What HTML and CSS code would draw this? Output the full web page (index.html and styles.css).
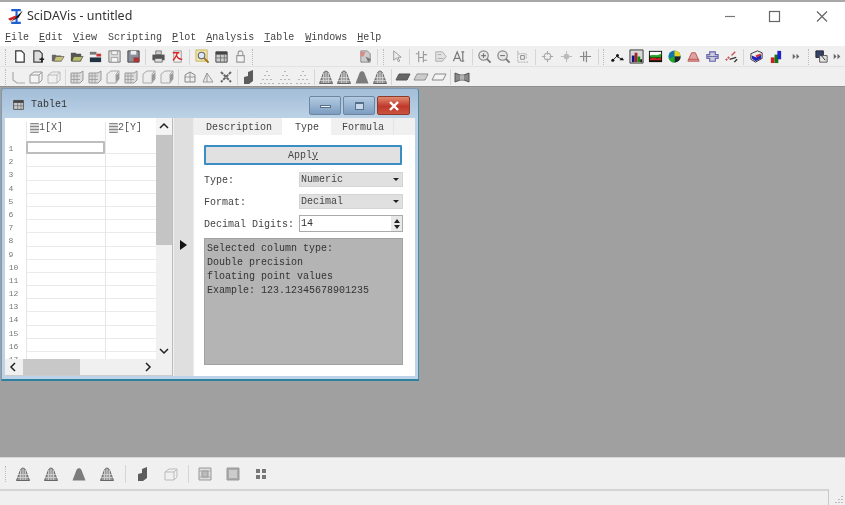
FILE: index.html
```html
<!DOCTYPE html>
<html lang="en">
<head>
  <meta charset="UTF-8" />
  <title>SciDAVis - untitled</title>
  <link rel="stylesheet" href="styles.css">
</head>
<body>
<svg class="sprite" width="0" height="0">
  <symbol id="i-new" viewBox="0 0 16 16"><path d="M4 2h6l3 3v9H4z" fill="#fff" stroke="#333" stroke-width="1.300"/></symbol>
  <symbol id="i-newproj" viewBox="0 0 16 16"><path d="M3 2h6l3 3v9H3z" fill="#ddd" stroke="#444" stroke-width="1.300"/><path d="M9 11h5M11.500 9v5" stroke="#222" stroke-width="1.600"/></symbol>
  <symbol id="i-open" viewBox="0 0 16 16"><path d="M2 13V6h4l1 1h5v6z" fill="#666"/><path d="M4 13l2-5h9l-3 5z" fill="#c9c27a" stroke="#555" stroke-width=".7"/></symbol>
  <symbol id="i-open2" viewBox="0 0 16 16"><path d="M2 13V4h5l1 1h5v8z" fill="#555"/><path d="M3 13l2-5h10l-3 5z" fill="#b7bd6b" stroke="#444" stroke-width=".7"/></symbol>
  <symbol id="i-recent" viewBox="0 0 16 16"><path d="M2 3h7v3H2z" fill="#777"/><path d="M9 5h5v3H9z" fill="#c33"/><path d="M2 9h12v5H2z" fill="#234"/></symbol>
  <symbol id="i-save" viewBox="0 0 16 16"><path d="M2 2h12v12H2z" fill="#ddd" stroke="#777"/><path d="M5 2h6v4H5zM4.500 9h7v5h-7z" fill="#f4f4f4" stroke="#888" stroke-width=".7"/></symbol>
  <symbol id="i-saveas" viewBox="0 0 16 16"><path d="M2 2h12v12H2z" fill="#8a8f99" stroke="#444"/><path d="M5 2h6v4H5z" fill="#eee"/><path d="M8 9h6v5H8z" fill="#a33"/></symbol>
  <symbol id="i-print" viewBox="0 0 16 16"><path d="M5 2h6v4H5z" fill="#ccc" stroke="#555" stroke-width=".7"/><path d="M1.500 6h13v6h-13z" fill="#555"/><path d="M4 10h8v4H4z" fill="#ddd" stroke="#444" stroke-width=".7"/></symbol>
  <symbol id="i-pdf" viewBox="0 0 16 16"><path d="M4 2h8v12H4z" fill="#f4f4f4" stroke="#999"/><path d="M3 4h7M8 4c-2 5-3 7-5 8M7 7c1 3 3 4 6 4" fill="none" stroke="#d22" stroke-width="1.400"/></symbol>
  <symbol id="i-find" viewBox="0 0 16 16"><path d="M1 1h12v12H1z" fill="#f0e6a8" stroke="#c8b860"/><circle cx="7" cy="7" r="3.500" fill="#dfe8f2" stroke="#667" stroke-width="1.200"/><path d="M10 10l4.500 4.500" stroke="#a07020" stroke-width="2"/></symbol>
  <symbol id="i-table" viewBox="0 0 16 16"><path d="M2 3h12v11H2z" fill="#ccc" stroke="#444"/><path d="M2 3h12v3H2z" fill="#444"/><path d="M2 9.500h12M7 6v8M11 6v8" stroke="#666" stroke-width=".8"/></symbol>
  <symbol id="i-lock" viewBox="0 0 16 16"><path d="M4 7h8v7H4z" fill="#f4f4f4" stroke="#999" stroke-width="1.200"/><path d="M5.500 7V4.500a2.500 2.500 0 0 1 5 0V7" fill="none" stroke="#999" stroke-width="1.200"/></symbol>
  <symbol id="i-script" viewBox="0 0 16 16"><path d="M3 2h7l3 3v9H3z" fill="#ccc" stroke="#888"/><path d="M3 3h5l-2 5H3z" fill="#d88"/><path d="M8 8l6 3-3 3z" fill="#777"/></symbol>
  <symbol id="i-pointer" viewBox="0 0 16 16"><path d="M5 2v10l3-2.500 2 4 1.500-.7-2-4H13z" fill="#eee" stroke="#999"/></symbol>
  <symbol id="i-axes" viewBox="0 0 16 16"><path d="M5 2v12M10 2v12M5 5H2M5 9h5M10 6h4M10 12h4" fill="none" stroke="#999" stroke-width="1.200"/></symbol>
  <symbol id="i-legend" viewBox="0 0 16 16"><path d="M3 3h7l4 5-4 5H3z" fill="#e4e4e4" stroke="#aaa"/><path d="M5 6h4M5 10h6" stroke="#aaa"/></symbol>
  <symbol id="i-text" viewBox="0 0 16 16"><path d="M1.500 13L5.500 3l4 10M3 10h5M11.500 3v10M10 3h3M10 13h3" fill="none" stroke="#7a7a7a" stroke-width="1.300"/></symbol>
  <symbol id="i-zoomin" viewBox="0 0 16 16"><circle cx="7" cy="7" r="5" fill="#e6e6e6" stroke="#888" stroke-width="1.300"/><path d="M4.500 7h5M7 4.500v5" stroke="#777" stroke-width="1.200"/><path d="M10.500 10.500l4 4" stroke="#777" stroke-width="2"/></symbol>
  <symbol id="i-zoomout" viewBox="0 0 16 16"><circle cx="7" cy="7" r="5" fill="#e6e6e6" stroke="#888" stroke-width="1.300"/><path d="M4.500 7h5" stroke="#777" stroke-width="1.200"/><path d="M10.500 10.500l4 4" stroke="#777" stroke-width="2"/></symbol>
  <symbol id="i-rescale" viewBox="0 0 16 16"><path d="M3 2v12h12M3 5h9v6" fill="none" stroke="#aaa" stroke-dasharray="2 1"/><path d="M6 7h4v4H6z" fill="none" stroke="#888"/></symbol>
  <symbol id="i-cross" viewBox="0 0 16 16"><circle cx="8" cy="8" r="3.500" fill="none" stroke="#aaa" stroke-width="1.200"/><path d="M8 2v4M8 10v4M2 8h4M10 8h4" stroke="#aaa" stroke-width="1.200"/></symbol>
  <symbol id="i-dot" viewBox="0 0 16 16"><circle cx="8" cy="8" r="3" fill="#bbb"/><path d="M8 2v12M2 8h12" stroke="#bbb"/></symbol>
  <symbol id="i-move" viewBox="0 0 16 16"><path d="M2 8h12M9 2v12M6 3v10" stroke="#888" stroke-width="1.300"/></symbol>
  <symbol id="i-lines" viewBox="0 0 16 16"><path d="M2 13l5-5 6 3" fill="none" stroke="#222"/><circle cx="3" cy="12" r="1.600" fill="#111"/><circle cx="8" cy="7" r="1.600" fill="#111"/><path d="M10 12l3-3 2 3z" fill="#111"/></symbol>
  <symbol id="i-bars" viewBox="0 0 16 16"><path d="M1 1h14v14H1z" fill="#d8d8d8" stroke="#333"/><path d="M3 7h3v7H3z" fill="#118"/><path d="M6 4h3v10H6z" fill="#a22"/><path d="M9 8h3v6H9z" fill="#181"/><path d="M12 11h2v3h-2z" fill="#111"/></symbol>
  <symbol id="i-area" viewBox="0 0 16 16"><path d="M1 2h14v12H1z" fill="#111"/><path d="M2 3h12v4H2z" fill="#fff"/><path d="M2 8l3-2 4 1 5-2v4H2z" fill="#2a2"/><path d="M2 10l4-1 4 1 4-1v3H2z" fill="#c22"/></symbol>
  <symbol id="i-pie" viewBox="0 0 16 16"><circle cx="8" cy="8" r="6.500" fill="#17a"/><path d="M8 8V1.500A6.500 6.500 0 0 1 14.500 8z" fill="#e8d020"/><path d="M8 8h6.500A6.500 6.500 0 0 1 8 14.500z" fill="#222"/><path d="M8 8v6.500A6.500 6.500 0 0 1 2 10z" fill="#2a2"/></symbol>
  <symbol id="i-mount" viewBox="0 0 16 16"><path d="M2 13l4-9h4l4 9z" fill="#e0a0a0" stroke="#b55"/><path d="M2 11h12" stroke="#b55"/></symbol>
  <symbol id="i-box" viewBox="0 0 16 16"><path d="M5 3h6v3h3v4h-3v3H5v-3H2V6h3z" fill="#ccd" stroke="#66a" stroke-width="1.200"/><path d="M2 8h12" stroke="#66a"/></symbol>
  <symbol id="i-stat" viewBox="0 0 16 16"><path d="M2 12l4-4" stroke="#c55" stroke-width="2" stroke-dasharray="2 1"/><path d="M8 7l4-4" stroke="#c55" stroke-width="1.500"/><path d="M6 11l7-2" stroke="#333" stroke-width="1.500"/><path d="M11 14l3-3" stroke="#333" stroke-width="1.500"/></symbol>
  <symbol id="i-cube3" viewBox="0 0 16 16"><path d="M2 5l7-3 5 2v6l-7 4-5-3z" fill="#eee" stroke="#333"/><path d="M3 7l5 2 5-3v4l-6 3-4-3z" fill="#22b"/><path d="M8 9l5-3-1-1-5 2z" fill="#c22"/></symbol>
  <symbol id="i-bar3" viewBox="0 0 16 16"><path d="M3 9h4v6H3z" fill="#c22"/><path d="M7 6h4v9H7z" fill="#171"/><path d="M10 2h4v9h-4z" fill="#22c"/></symbol>
  <symbol id="i-more" viewBox="0 0 16 16"><path d="M4 5l3 3-3 3zM8 5l3 3-3 3z" fill="#666"/></symbol>
  <symbol id="i-panel" viewBox="0 0 16 16"><path d="M2 2h8v7H2z" fill="#346" stroke="#223"/><path d="M6 7h8v7H6z" fill="#e6e6e6" stroke="#555"/><path d="M7 6l5 6" stroke="#222"/></symbol>
  <symbol id="i-l3d" viewBox="0 0 16 16"><path d="M3 3v8l4 3h8" fill="none" stroke="#aaa" stroke-width="1.200"/></symbol>
  <symbol id="i-cube" viewBox="0 0 16 16"><path d="M2 6l4-3h8v8l-3 3H2zM2 6h9v8M11 6l3-3" fill="#f4f4f4" stroke="#999"/></symbol>
  <symbol id="i-cubeb" viewBox="0 0 16 16"><path d="M2 6l4-3h8v8l-3 3H2zM2 6h9v8M11 6l3-3" fill="none" stroke="#bbb"/></symbol>
  <symbol id="i-gridcube" viewBox="0 0 16 16"><path d="M2 4h9l3-2v9l-3 3H2z" fill="#ddd" stroke="#999"/><path d="M2 7h9M2 10.500h9M5 4v10M8 4v10" stroke="#999" stroke-width=".8"/></symbol>
  <symbol id="i-cubesolid" viewBox="0 0 16 16"><path d="M2 5l4-3h8v8l-3 4H2z" fill="#ededed" stroke="#aaa"/><path d="M11 5v9M11 5l3-3" stroke="#aaa"/><path d="M11 6l3-2v6l-3 3z" fill="#999"/></symbol>
  <symbol id="i-3dtool" viewBox="0 0 16 16"><path d="M3 6l5-3 5 3v7H3z" fill="#eee" stroke="#888"/><path d="M3 8h10M8 3v10" stroke="#888" stroke-width=".8"/></symbol>
  <symbol id="i-pyr" viewBox="0 0 16 16"><path d="M3 13l4-9 6 9zM7 4v9" fill="#eee" stroke="#999"/></symbol>
  <symbol id="i-xcross" viewBox="0 0 16 16"><path d="M3 3l10 10M13 3L3 13" stroke="#666" stroke-width="2" stroke-dasharray="3 1"/></symbol>
  <symbol id="i-col3" viewBox="0 0 16 16"><path d="M3 8l4-1V3l5-2v11l-4 3H3z" fill="#5c5c5c"/></symbol>
  <symbol id="i-dots" viewBox="0 0 16 16"><path d="M8 2v1M6 6v1M10 6v1M4 10v1M8 10v1M12 10v1M2 14v1M6 14v1M10 14v1M14 14v1" stroke="#999" stroke-width="1.300"/></symbol>
  <symbol id="i-mesh" viewBox="0 0 16 16"><path d="M1.500 14.500L5.500 4c1-2.500 4-2.500 5 0l4 10.500z" fill="#999" stroke="#666"/><path d="M2 11.500h12M3 8.500h10M5.500 4v10M8 3v11M10.500 4v10" stroke="#ddd" stroke-width=".7"/></symbol>
  <symbol id="i-hill" viewBox="0 0 16 16"><path d="M1.500 14.500L5.500 4c1-2.500 4-2.500 5 0l4 10.500z" fill="#7c7c7c"/></symbol>
  <symbol id="i-plane" viewBox="0 0 16 16"><path d="M4 5h11l-3 6H1z" fill="#666" stroke="#555"/></symbol>
  <symbol id="i-plane2" viewBox="0 0 16 16"><path d="M4 5h11l-3 6H1z" fill="#ddd" stroke="#888"/><path d="M3 7h10M2 9h10" stroke="#bbb"/></symbol>
  <symbol id="i-plane3" viewBox="0 0 16 16"><path d="M4 5h11l-3 6H1z" fill="#f4f4f4" stroke="#888"/></symbol>
  <symbol id="i-tie" viewBox="0 0 16 16"><path d="M1 4l5 2h4l5-2v9l-5-2H6l-5 2z" fill="#888" stroke="#555"/><path d="M7 6v5M9 6v5" stroke="#ddd"/></symbol>
  <symbol id="i-frame" viewBox="0 0 16 16"><path d="M2 2h12v12H2z" fill="#ddd" stroke="#999"/><path d="M5 5h6v6H5z" fill="#bbb" stroke="#999"/><path d="M2 5h12M2 11h12" stroke="#aaa"/></symbol>
  <symbol id="i-frame2" viewBox="0 0 16 16"><path d="M2 2h12v12H2z" fill="#aaa" stroke="#999"/><path d="M4 4h8v8H4z" fill="#ccc"/></symbol>
  <symbol id="i-four" viewBox="0 0 16 16"><path d="M3 3h4v4H3zM9 3h4v4H9zM3 9h4v4H3zM9 9h4v4H9z" fill="#777"/></symbol>
</svg>

<div class="app">
  <div class="titlebar">
    <svg class="app-logo" viewBox="0 0 16 16" width="17" height="17">
      <path d="M4 1h9v2H10v10h3v2H4v-2h4V3H4z" fill="#1f5fd0"/>
      <path d="M1 15l7-6 7-7-4 7-6 3z" fill="#111"/>
      <path d="M1 10l7-3 1 2-6 3z" fill="#d02020"/>
    </svg>
    <span class="app-title">SciDAVis - untitled</span>
    <div class="win-btns">
      <svg viewBox="0 0 46 26" width="46" height="26"><path d="M18 13.500h10" stroke="#777" stroke-width="1.200"/></svg>
      <svg viewBox="0 0 46 26" width="46" height="26"><rect x="16.500" y="8.500" width="10" height="10" fill="none" stroke="#666" stroke-width="1.200"/></svg>
      <svg viewBox="0 0 46 26" width="46" height="26"><path d="M18 8.500l10 10M28 8.500l-10 10" stroke="#666" stroke-width="1.200"/></svg>
    </div>
  </div>

  <div class="menubar">
    <span><u>F</u>ile</span>
    <span><u>E</u>dit</span>
    <span><u>V</u>iew</span>
    <span class="menu-s">Scripting</span>
    <span><u>P</u>lot</span>
    <span><u>A</u>nalysis</span>
    <span><u>T</u>able</span>
    <span class="menu-w"><u>W</u>indows</span>
    <span><u>H</u>elp</span>
  </div>

  <div class="toolbar row1">
    <i class="grip"></i>
    <svg class="ic"><use href="#i-new"/></svg>
    <svg class="ic"><use href="#i-newproj"/></svg>
    <svg class="ic"><use href="#i-open"/></svg>
    <svg class="ic"><use href="#i-open2"/></svg>
    <svg class="ic"><use href="#i-recent"/></svg>
    <svg class="ic"><use href="#i-save"/></svg>
    <svg class="ic"><use href="#i-saveas"/></svg>
    <i class="sep"></i>
    <svg class="ic"><use href="#i-print"/></svg>
    <svg class="ic"><use href="#i-pdf"/></svg>
    <i class="sep"></i>
    <svg class="ic"><use href="#i-find"/></svg>
    <svg class="ic"><use href="#i-table"/></svg>
    <svg class="ic"><use href="#i-lock"/></svg>
    <i class="grip"></i>
    <span class="push"></span>
    <svg class="ic"><use href="#i-script"/></svg>
    <i class="sep"></i>
    <i class="grip"></i>
    <svg class="ic"><use href="#i-pointer"/></svg>
    <i class="sep"></i>
    <svg class="ic"><use href="#i-axes"/></svg>
    <svg class="ic"><use href="#i-legend"/></svg>
    <svg class="ic"><use href="#i-text"/></svg>
    <i class="sep"></i>
    <svg class="ic"><use href="#i-zoomin"/></svg>
    <svg class="ic"><use href="#i-zoomout"/></svg>
    <svg class="ic"><use href="#i-rescale"/></svg>
    <i class="sep"></i>
    <svg class="ic"><use href="#i-cross"/></svg>
    <svg class="ic"><use href="#i-dot"/></svg>
    <svg class="ic"><use href="#i-move"/></svg>
    <i class="sep"></i>
    <i class="grip"></i>
    <svg class="ic"><use href="#i-lines"/></svg>
    <svg class="ic"><use href="#i-bars"/></svg>
    <svg class="ic"><use href="#i-area"/></svg>
    <svg class="ic"><use href="#i-pie"/></svg>
    <svg class="ic"><use href="#i-mount"/></svg>
    <svg class="ic"><use href="#i-box"/></svg>
    <svg class="ic"><use href="#i-stat"/></svg>
    <i class="sep"></i>
    <svg class="ic"><use href="#i-cube3"/></svg>
    <svg class="ic"><use href="#i-bar3"/></svg>
    <svg class="ic more"><use href="#i-more"/></svg>
    <i class="grip"></i>
    <svg class="ic"><use href="#i-panel"/></svg>
    <svg class="ic tight"><use href="#i-more"/></svg>
  </div>

  <div class="toolbar row2">
    <i class="grip"></i>
    <svg class="ic"><use href="#i-l3d"/></svg>
    <svg class="ic"><use href="#i-cube"/></svg>
    <svg class="ic"><use href="#i-cubeb"/></svg>
    <i class="sep"></i>
    <svg class="ic"><use href="#i-gridcube"/></svg>
    <svg class="ic"><use href="#i-gridcube"/></svg>
    <svg class="ic"><use href="#i-cubesolid"/></svg>
    <svg class="ic"><use href="#i-gridcube"/></svg>
    <svg class="ic"><use href="#i-cubesolid"/></svg>
    <svg class="ic"><use href="#i-cubesolid"/></svg>
    <i class="sep"></i>
    <svg class="ic"><use href="#i-3dtool"/></svg>
    <svg class="ic"><use href="#i-pyr"/></svg>
    <svg class="ic"><use href="#i-xcross"/></svg>
    <i class="sep"></i>
    <svg class="ic"><use href="#i-col3"/></svg>
    <svg class="ic"><use href="#i-dots"/></svg>
    <svg class="ic"><use href="#i-dots"/></svg>
    <svg class="ic"><use href="#i-dots"/></svg>
    <i class="sep"></i>
    <svg class="ic"><use href="#i-mesh"/></svg>
    <svg class="ic"><use href="#i-mesh"/></svg>
    <svg class="ic"><use href="#i-hill"/></svg>
    <svg class="ic"><use href="#i-mesh"/></svg>
    <i class="sep"></i>
    <svg class="ic"><use href="#i-plane"/></svg>
    <svg class="ic"><use href="#i-plane2"/></svg>
    <svg class="ic"><use href="#i-plane3"/></svg>
    <i class="sep"></i>
    <svg class="ic"><use href="#i-tie"/></svg>
  </div>

  <div class="workspace">
    <div class="mdi-win">
      <div class="mdi-title">
        <svg class="ic-table" viewBox="0 0 16 16" width="13" height="13"><use href="#i-table"/></svg>
        <span>Table1</span>
        <div class="mdi-btns">
          <b class="mbtn min"><i></i></b>
          <b class="mbtn max"><i></i></b>
          <b class="mbtn close">
            <svg viewBox="0 0 12 12" width="12" height="12"><path d="M2 2l8 8M10 2l-8 8" stroke="#fff" stroke-width="2.400"/></svg>
          </b>
        </div>
      </div>
      <div class="mdi-body">
        <div class="sheet">
          <div class="sheet-view">
            <div class="sheet-head">
              <span class="corner"></span>
              <span class="col-x"><em class="hd-ic"></em>1[X]</span>
              <span class="col-y"><em class="hd-ic"></em>2[Y]</span>
            </div>
            <div class="sheet-rows" id="rows"></div>
          </div>
          <div class="vscroll">
            <svg viewBox="0 0 16 16" width="16" height="16"><path d="M4 10l4-4 4 4" fill="none" stroke="#222" stroke-width="1.500"/></svg>
            <div class="vtrack"><div class="vthumb"></div></div>
            <svg viewBox="0 0 16 16" width="16" height="16"><path d="M4 6l4 4 4-4" fill="none" stroke="#222" stroke-width="1.500"/></svg>
          </div>
          <div class="hscroll">
            <svg viewBox="0 0 16 16" width="16" height="16"><path d="M10 4L6 8l4 4" fill="none" stroke="#222" stroke-width="1.500"/></svg>
            <div class="htrack"><div class="hthumb"></div></div>
            <svg viewBox="0 0 16 16" width="16" height="16"><path d="M6 4l4 4-4 4" fill="none" stroke="#222" stroke-width="1.500"/></svg>
          </div>
          <div class="scroll-corner"></div>
        </div>

        <div class="splitter"><span class="arrow"></span></div>

        <div class="panel">
          <div class="tabs">
            <span class="tab">Description</span>
            <span class="tab active">Type</span>
            <span class="tab">Formula</span>
          </div>
          <div class="tab-page">
            <button class="apply" type="button">Appl<u>y</u></button>
            <div class="field">
              <label>Type:</label>
              <div class="combo">Numeric<i></i></div>
            </div>
            <div class="field">
              <label>Format:</label>
              <div class="combo">Decimal<i></i></div>
            </div>
            <div class="field">
              <label>Decimal Digits:</label>
              <div class="spin">14
                <span class="spin-btns"><i class="up"></i><i class="down"></i></span>
              </div>
            </div>
            <div class="info">Selected column type:<br>Double precision<br>floating point values<br>Example: 123.12345678901235</div>
          </div>
        </div>
      </div>
    </div>
  </div>

  <div class="toolbar bottombar">
    <i class="grip"></i>
    <svg class="ic"><use href="#i-mesh"/></svg>
    <svg class="ic"><use href="#i-mesh"/></svg>
    <svg class="ic"><use href="#i-hill"/></svg>
    <svg class="ic"><use href="#i-mesh"/></svg>
    <i class="sep big"></i>
    <svg class="ic"><use href="#i-col3"/></svg>
    <svg class="ic"><use href="#i-cubeb"/></svg>
    <i class="sep"></i>
    <svg class="ic"><use href="#i-frame"/></svg>
    <svg class="ic"><use href="#i-frame2"/></svg>
    <svg class="ic"><use href="#i-four"/></svg>
  </div>

  <div class="statusbar">
    <div class="status-box"></div>
    <svg class="size-grip" viewBox="0 0 12 12" width="12" height="12"><path d="M10 3v1M7 6v1M10 6v1M4 9v1M7 9v1M10 9v1" stroke="#aaa" stroke-width="1.500"/></svg>
  </div>
</div>

<script>
  const rows = document.getElementById('rows');
  for (let i = 1; i <= 17; i++) {
    const row = document.createElement('div');
    row.className = 'sheet-row';
    row.innerHTML = `<span class="num">${i}</span><span class="cell${i === 1 ? ' current' : ''}"></span><span class="cell"></span>`;
    rows.appendChild(row);
  }
</script>
</body>
</html>
```

FILE: styles.css
```css
* {
  box-sizing: border-box;
}
html, body {
  margin: 0;
  height: 100%;
  overflow: hidden;
}
body {
  font-family: 'Liberation Mono', monospace;
  font-size: 10px;
  color: #333;
  background: #fff;
}
.sprite {
  position: absolute;
}
.app {
  display: flex;
  flex-direction: column;
  height: 505px;
  filter: blur(0.5px);
  border-top: 2px solid #a8a8a8;
}

/* title + menu */
.titlebar {
  height: 27px;
  display: flex;
  align-items: center;
  padding-left: 7px;
  background: #fff;
}
.app-logo {
  margin-top: 1px;
}
.app-title {
  margin-left: 3px;
  font-family: 'Noto Sans', sans-serif;
  font-size: 12.500px;
  color: #333;
}
.win-btns {
  margin-left: auto;
  display: flex;
  height: 26px;
}
.menubar {
  height: 17px;
  display: flex;
  gap: 10px;
  padding-left: 5px;
  align-items: center;
  color: #444;
  background: #fff;
}
.menu-s {
  margin-left: 1px;
}
.menu-w {
  margin-left: 1px;
}

/* toolbars */
.toolbar {
  display: flex;
  align-items: center;
  background: #f0f0f0;
  padding-left: 3px;
}
.row1 {
  height: 21px;
  padding-top: 1px;
  border-bottom: 1px solid #e2e2e2;
}
.row2 {
  height: 19px;
}
.ic {
  flex: none;
}
.row1 .ic {
  width: 15px;
  height: 15px;
  margin: 0 2px;
}
.row1 .more {
  margin-left: 4px;
}
.row1 .tight {
  margin-left: -1px;
}
.row2 .ic {
  width: 16px;
  height: 16px;
  margin: 0 1px;
}
.bottombar .ic {
  width: 16px;
  height: 16px;
  margin: 0 6px;
}
.sep {
  width: 1px;
  height: 16px;
  margin: 0 2.500px;
  background: #d6d6d6;
  flex: none;
}
.row2 .sep {
  margin: 0 2px;
}
.sep.big {
  margin: 0 3.500px;
}
.grip {
  width: 2px;
  height: 16px;
  margin: 0 2.250px;
  border-left: 1px dotted #bbb;
  flex: none;
}
.row2 .grip, .bottombar .grip {
  margin: 0 2px;
}
.push {
  width: 99.500px;
  flex: none;
}

/* mdi area */
.workspace {
  flex: 1;
  position: relative;
  background: #a0a0a0;
  border-top: 1px solid #8f8f8f;
}
.mdi-win {
  position: absolute;
  left: 1px;
  top: 1px;
  width: 418px;
  height: 293px;
  padding: 0 3px 3px;
  background: linear-gradient(#a3bdd8, #bcd2e6 30px, #bdd3e7);
  border: 1px solid #7f99b0;
  border-bottom: 2px solid #2f7f9f;
  border-right-color: #3f8fa8;
  border-radius: 3px 3px 0 0;
}
.mdi-title {
  height: 29px;
  display: flex;
  align-items: center;
  padding: 2px 0 0 7px;
  font-size: 10px;
  color: #333;
}
.ic-table {
  margin-right: 6px;
}
.mdi-btns {
  margin-left: auto;
  margin-right: 5px;
  margin-top: 2px;
  display: flex;
  gap: 2px;
}
.mbtn {
  display: flex;
  align-items: center;
  justify-content: center;
  height: 19px;
  width: 32px;
  border: 1px solid #6d87a3;
  border-radius: 2px;
  background: linear-gradient(#b4cbe2, #7c9dc0);
}
.mbtn.close {
  width: 33px;
  border-color: #8c3a2a;
  background: linear-gradient(#e08a70, #c0392b 55%, #c9543f);
}
.min i {
  width: 11px;
  height: 3px;
  margin-top: 2px;
  background: #eef3f8;
  border: 1px solid #56708c;
}
.max i {
  width: 9px;
  height: 8px;
  border: 1px solid #56708c;
  border-top-width: 2px;
  background: #c9d9e9;
}
.mdi-body {
  display: flex;
  height: 258px;
  background: #f0f0f0;
}

/* spreadsheet */
.sheet {
  width: 168px;
  flex: none;
  display: grid;
  grid-template-columns: 151px 16px;
  grid-template-rows: 241px 16px;
  background: #f0f0f0;
  border-right: 1px solid #bbb;
  border-bottom: 1px solid #ccc;
}
.sheet-view {
  background: #fff;
  overflow: hidden;
}
.sheet-head {
  display: flex;
  height: 23px;
  padding-top: 4px;
  font-size: 10px;
  color: #555;
}
.corner {
  width: 21px;
}
.col-x {
  width: 79px;
  padding-left: 3px;
  border-left: 1px solid #e8e8e8;
}
.col-y {
  padding-left: 3px;
  border-left: 1px solid #e8e8e8;
}
.hd-ic {
  display: inline-block;
  width: 9px;
  height: 10px;
  vertical-align: -3px;
  background: repeating-linear-gradient(#888 0 1px, #d8d8d8 1px 3px);
  border-radius: 1px;
}
.sheet-row {
  display: grid;
  grid-template-columns: 21px 79px 51px;
  height: 13.200px;
}
.num {
  font-size: 8px;
  color: #777;
  text-align: center;
  line-height: 16px;
  padding-right: 4px;
  overflow: hidden;
}
.sheet-row:nth-child(-n+9) .num {
  padding-right: 9px;
}
.cell {
  border-left: 1px solid #e6e6e6;
  border-bottom: 1px solid #eaeaea;
}
.cell.current {
  border: 2px solid #bdbdbd;
  border-radius: 1px;
}
.vscroll {
  display: flex;
  flex-direction: column;
  background: #f0f0f0;
}
.vscroll svg, .hscroll svg {
  flex: none;
}
.vscroll svg:first-child {
  background: #f4f4f4;
  margin-bottom: 1px;
}
.vtrack {
  flex: 1;
}
.vthumb {
  height: 110px;
  background: #c4c4c4;
}
.hscroll {
  display: flex;
  background: #f0f0f0;
}
.htrack {
  flex: 1;
  padding-left: 2px;
}
.hthumb {
  width: 57px;
  height: 100%;
  background: #c8c8c8;
}
.splitter {
  width: 20px;
  margin-left: 1px;
  flex: none;
  display: flex;
  align-items: center;
  justify-content: center;
  background: #dfdfdf;
  border-right: 1px solid #ececec;
  padding-bottom: 4px;
}
.arrow {
  width: 0;
  height: 0;
  border-left: 7px solid #111;
  border-top: 5px solid transparent;
  border-bottom: 5px solid transparent;
}

/* right panel */
.panel {
  flex: 1;
  display: flex;
  flex-direction: column;
  background: #f0f0f0;
}
.tabs {
  height: 17px;
  display: flex;
  color: #444;
  line-height: 19px;
}
.tab:first-child {
  width: 88px;
  padding-left: 12px;
}
.tab.active {
  width: 49px;
  height: 18px;
  padding-left: 13px;
  background: #fff;
}
.tab:last-child {
  width: 63px;
  padding-left: 11px;
  border-right: 1px solid #e4e4e4;
}
.tab-page {
  flex: 1;
  background: #fff;
  padding: 10px 12px 10px 10px;
  display: flex;
  flex-direction: column;
}
.apply {
  height: 20px;
  width: 198px;
  flex: none;
  padding: 0;
  margin-bottom: 1px;
  background: #e1e1e1;
  border: 2px solid #3a8ec4;
  border-radius: 1px;
  font: inherit;
  color: #444;
}
.field {
  display: flex;
  align-items: center;
  justify-content: space-between;
  margin-top: 6px;
  color: #444;
}
.field:nth-of-type(2) {
  margin-top: 7px;
}
.field label {
  padding-top: 1px;
}
.combo, .spin {
  width: 104px;
  height: 15px;
  display: flex;
  align-items: center;
  padding-left: 1px;
}
.combo {
  background: #e0e0e0;
  border: 1px solid #d4d4d4;
}
.combo i {
  margin-left: auto;
  margin-right: 3px;
  border-left: 3px solid transparent;
  border-right: 3px solid transparent;
  border-top: 3px solid #222;
}
.spin {
  height: 17px;
  background: #fff;
  border: 1px solid #aaa;
  color: #333;
}
.spin-btns {
  margin-left: auto;
  width: 11px;
  height: 100%;
  display: flex;
  flex-direction: column;
  align-items: center;
  justify-content: center;
  gap: 2px;
  background: #e8e8e8;
}
.spin-btns .up {
  border-left: 3px solid transparent;
  border-right: 3px solid transparent;
  border-bottom: 4px solid #222;
}
.spin-btns .down {
  border-left: 3px solid transparent;
  border-right: 3px solid transparent;
  border-top: 4px solid #222;
}
.info {
  margin-top: 6px;
  height: 127px;
  width: 199px;
  padding: 3px 2px;
  background: #b4b4b4;
  border: 1px solid #a2a2a2;
  line-height: 14px;
  color: #333;
}

/* bottom */
.bottombar {
  height: 32px;
  flex: none;
  border-top: 1px solid #d8d8d8;
}
.bottombar .sep {
  height: 18px;
}
.statusbar {
  height: 16px;
  flex: none;
  display: flex;
  align-items: flex-end;
  background: #f0f0f0;
}
.status-box {
  width: 829px;
  height: 100%;
  border-right: 1px solid #c8c8c8;
  border-top: 2px solid #d4d4d4;
}
.size-grip {
  margin-left: 3px;
}
```
